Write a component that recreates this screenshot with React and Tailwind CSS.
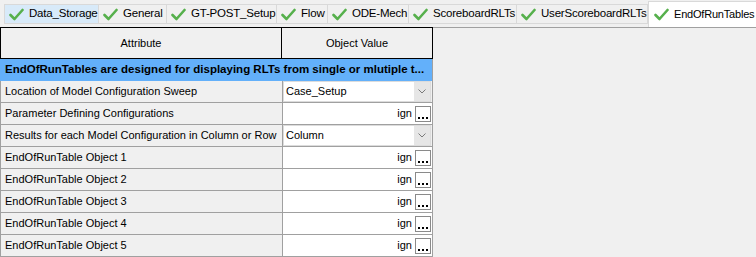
import React from 'react';

const tabs = [
  { name: 'Data_Storage', w: 95, hover: true },
  { name: 'General', w: 69 },
  { name: 'GT-POST_Setup', w: 111 },
  { name: 'Flow', w: 52 },
  { name: 'ODE-Mech', w: 82 },
  { name: 'ScoreboardRLTs', w: 109 },
  { name: 'UserScoreboardRLTs', w: 132 },
];

const rows = [
  { label: 'Location of Model Configuration Sweep', kind: 'select', value: 'Case_Setup' },
  { label: 'Parameter Defining Configurations', kind: 'ign' },
  { label: 'Results for each Model Configuration in Column or Row', kind: 'select', value: 'Column' },
  { label: 'EndOfRunTable Object 1', kind: 'ign' },
  { label: 'EndOfRunTable Object 2', kind: 'ign' },
  { label: 'EndOfRunTable Object 3', kind: 'ign' },
  { label: 'EndOfRunTable Object 4', kind: 'ign' },
  { label: 'EndOfRunTable Object 5', kind: 'ign' },
];

function Check() {
  return (
    <svg width="15" height="13" viewBox="0 0 15 13" className="shrink-0">
      <path d="M1.5 7 L5.5 11 L13.5 2" fill="none" stroke="#56b04c" strokeWidth="2.6" strokeLinecap="round" strokeLinejoin="round" />
    </svg>
  );
}

function Tab({ name, w, hover, active }) {
  return (
    <div
      style={{ width: w }}
      className={
        active
          ? 'h-[26px] flex items-center gap-[5px] pl-[5px] bg-white border border-b-0 border-[#d9d9d9] shrink-0'
          : `h-[20px] flex items-center gap-[5px] pl-[4px] border border-[#d9d9d9] -ml-px first:ml-0 shrink-0 ${hover ? 'bg-[#d8eaf9] border-[#c4def5]' : 'bg-[#f0f0f0]'}`
      }
    >
      <Check />
      <span className={`${active ? 'text-[11px]' : 'text-[11.5px]'} text-black whitespace-nowrap leading-none tracking-[-0.2px]`}>{name}</span>
    </div>
  );
}

function Cell({ row }) {
  if (row.kind === 'select') {
    return (
      <div className="flex-1 flex h-full bg-white border border-[#dcdcdc] mr-px">
        <div className="flex-1 flex items-center pl-[2px] text-[11px]">{row.value}</div>
        <div className="w-[16px] bg-[#e6e6e6] flex items-center justify-center">
          <svg width="8" height="5" viewBox="0 0 8 5">
            <path d="M0.5 0.5 L4 4 L7.5 0.5" fill="none" stroke="#7a7a7a" strokeWidth="1" />
          </svg>
        </div>
      </div>
    );
  }
  return (
    <div className="flex-1 flex items-center justify-end bg-white h-full pr-px">
      <span className="text-[11px] mr-[3px]">ign</span>
      <div className="w-[16px] h-[16px] border border-[#8a8a8a] bg-white flex items-end justify-center pb-[2px] gap-[2px]">
        <span className="w-[2px] h-[2px] bg-black" />
        <span className="w-[2px] h-[2px] bg-black" />
        <span className="w-[2px] h-[2px] bg-black" />
      </div>
    </div>
  );
}

export default function App() {
  return (
    <div className="w-[756px] h-[257px] overflow-hidden bg-[#f0f0f0] text-black" style={{ fontFamily: '"Liberation Sans", Arial, sans-serif' }}>
      <div className="h-[28px] flex items-end border-b border-[#a0a0a0]">
        <div className="flex items-end pl-[4px] w-full">
          <div className="flex mb-[3px]">
            {tabs.map((t) => (
              <Tab key={t.name} {...t} />
            ))}
          </div>
          <Tab name="EndOfRunTables" w={112} active />
        </div>
      </div>

      <div className="w-[433px]">
        <div className="flex h-[32px] border border-black bg-[#f0f0f0] -mt-px text-[11px]">
          <div className="w-[281px] border-r border-black flex items-center justify-center">Attribute</div>
          <div className="flex-1 flex items-center justify-center">Object Value</div>
        </div>
        <div className="h-[22px] bg-[#63b0fa] flex items-center pl-[5px] text-[11.5px] font-bold whitespace-nowrap overflow-hidden border-r border-[#a0a0a0]">
          EndOfRunTables are designed for displaying RLTs from single or mlutiple t...
        </div>
        {rows.map((r) => (
          <div key={r.label} className="flex h-[22px] border-l border-r border-b border-[#a0a0a0]">
            <div className="w-[282px] border-r border-[#a0a0a0] flex items-center pl-[4px] text-[11px] whitespace-nowrap overflow-hidden">
              {r.label}
            </div>
            <Cell row={r} />
          </div>
        ))}
      </div>
    </div>
  );
}
